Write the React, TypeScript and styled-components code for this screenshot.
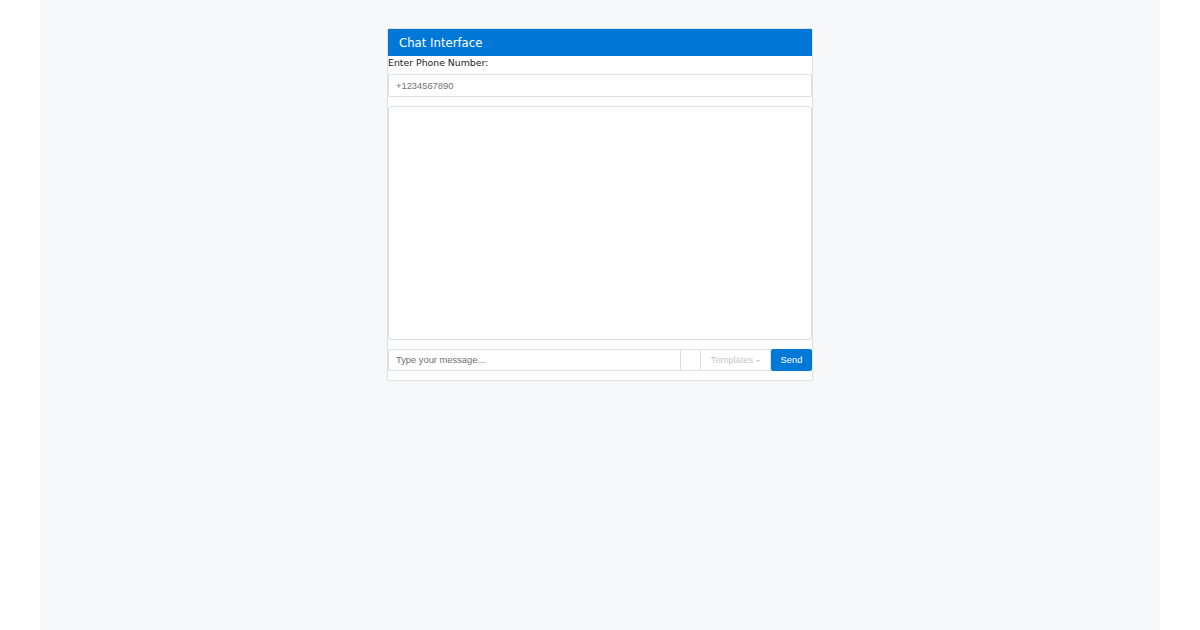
import React from "react";
import styled, { createGlobalStyle } from "styled-components";

const Global = createGlobalStyle`
  html, body { margin: 0; padding: 0; background: #ffffff; }
  body { font-family: "DejaVu Sans", sans-serif; }
  * { box-sizing: border-box; }
`;

const Page = styled.div`
  margin: 0 40px;
  min-height: 630px;
  background: #f7f8fa;
  display: flex;
  justify-content: center;
  align-items: flex-start;
  padding-top: 28px;
`;

const Card = styled.div`
  width: 426px;
  background: #ffffff;
  border: 1px solid #dfe1e5;
  border-radius: 2px;
  display: flex;
  flex-direction: column;
  padding-bottom: 9px;
`;

const Header = styled.div`
  height: 27px;
  background: #0078d7;
  color: #ffffff;
  font-family: "DejaVu Sans", sans-serif;
  font-size: 11.7px;
  display: flex;
  align-items: center;
  padding-left: 11px;
`;

const Label = styled.label`
  font-family: "DejaVu Sans", sans-serif;
  font-size: 9.33px;
  color: #222;
  height: 18px;
  line-height: 14px;
`;

const TextInput = styled.input`
  font-family: "Liberation Sans", Arial, sans-serif;
  font-size: 9.33px;
  color: #333;
  border: 1px solid #dcdee2;
  background: #fff;
  outline: none;
  padding: 0 7px;
  &::placeholder { color: #707070; }
`;

const PhoneInput = styled(TextInput)`
  height: 23px;
  width: 100%;
  border-radius: 2px;
`;

const Messages = styled.div`
  margin-top: 9px;
  height: 234px;
  border: 1px solid #dcdee2;
  border-radius: 3px;
`;

const Row = styled.div`
  margin-top: 9px;
  height: 22px;
  display: flex;
`;

const MessageInput = styled(TextInput)`
  flex: 1;
  height: 22px;
  border-radius: 2px 0 0 2px;
`;

const Spacer = styled.div`
  width: 20px;
  border: 1px solid #dcdee2;
  border-left: none;
`;

const TemplatesButton = styled.button`
  width: 70px;
  border: 1px solid #dcdee2;
  border-left: none;
  background: #fff;
  font-family: "Liberation Sans", Arial, sans-serif;
  font-size: 9.33px;
  color: #c6c8cc;
  padding: 0;
  display: flex;
  align-items: center;
  justify-content: center;
  gap: 3px;
`;

const Caret = styled.span`
  width: 0;
  height: 0;
  border-left: 2.5px solid transparent;
  border-right: 2.5px solid transparent;
  border-top: 2.5px solid #c6c8cc;
  margin-top: 1px;
`;

const SendButton = styled.button`
  width: 41px;
  border: none;
  border-radius: 2px;
  background: #0078d7;
  color: #fff;
  font-family: "Liberation Sans", Arial, sans-serif;
  font-size: 9.33px;
  padding: 0;
`;

export default function App() {
  return (
    <>
      <Global />
      <Page>
        <Card>
          <Header>Chat Interface</Header>
          <Label>Enter Phone Number:</Label>
          <PhoneInput placeholder="+1234567890" />
          <Messages />
          <Row>
            <MessageInput placeholder="Type your message..." />
            <Spacer />
            <TemplatesButton>
              Templates <Caret />
            </TemplatesButton>
            <SendButton>Send</SendButton>
          </Row>
        </Card>
      </Page>
    </>
  );
}
